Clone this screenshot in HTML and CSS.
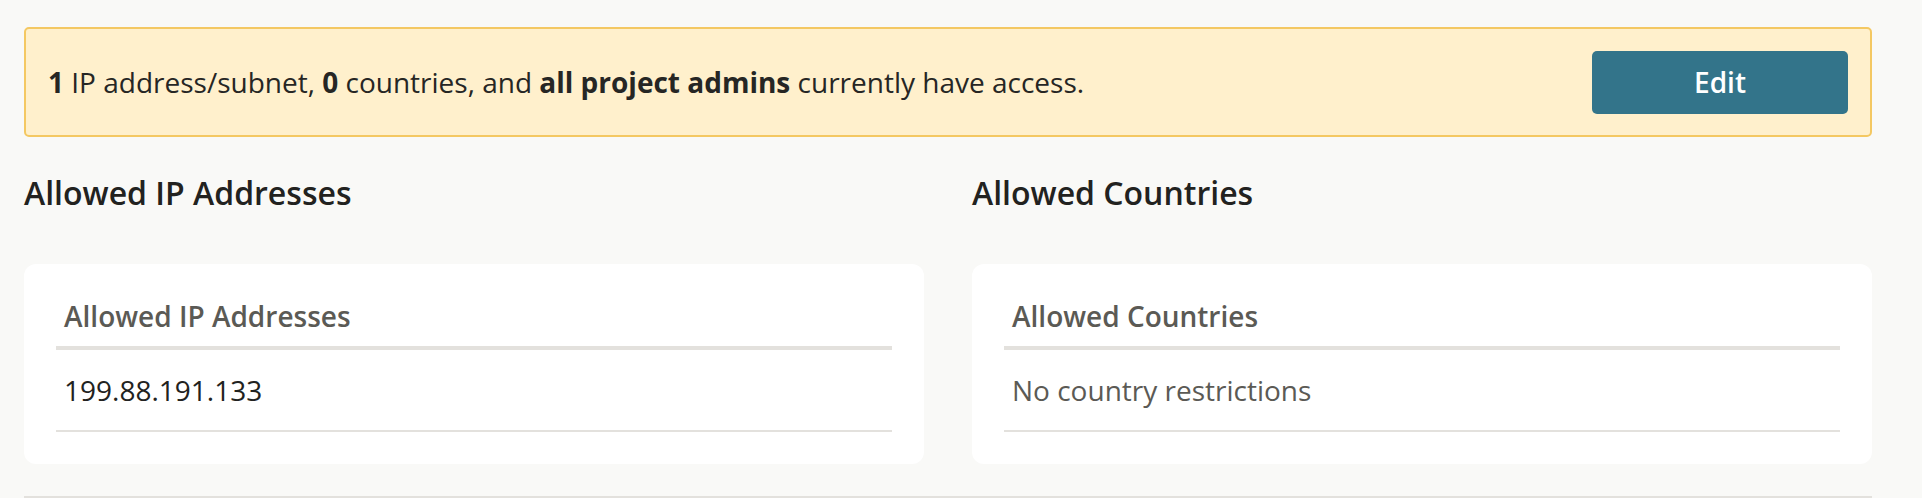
FILE: index.html
```html
<!DOCTYPE html>
<html lang="en">
<head>
<meta charset="utf-8">
<title>Access restrictions</title>
<link rel="stylesheet" href="styles.css">
</head>
<body>
<div class="page">
  <div class="notice">
    <p class="notice-text"><strong>1</strong> IP address/subnet, <strong>0</strong> countries, and <strong>all project admins</strong> currently have access.</p>
    <button class="btn-edit" type="button">Edit</button>
  </div>
  <div class="columns">
    <section class="col">
      <h2 class="col-title">Allowed IP Addresses</h2>
      <div class="card">
        <table class="list">
          <thead><tr><th>Allowed IP Addresses</th></tr></thead>
          <tbody><tr><td class="value">199.88.191.133</td></tr></tbody>
        </table>
      </div>
    </section>
    <section class="col">
      <h2 class="col-title">Allowed Countries</h2>
      <div class="card">
        <table class="list">
          <thead><tr><th>Allowed Countries</th></tr></thead>
          <tbody><tr><td class="muted">No country restrictions</td></tr></tbody>
        </table>
      </div>
    </section>
  </div>
  <div class="divider"></div>
</div>
</body>
</html>
```
FILE: styles.css
```css
html, body {
  margin: 0;
  padding: 0;
  background: #f9f9f7;
}
body {
  font-family: "Open Sans", "Liberation Sans", sans-serif;
  font-size: 28px;
  color: #222220;
}
.page {
  width: 1848px;
  padding: 27px 0 0 24px;
}
.notice {
  display: flex;
  align-items: center;
  justify-content: space-between;
  height: 106px;
  padding: 0 22px 0 22px;
  background: #fff0cc;
  border: 2px solid #f4c862;
  border-radius: 5px;
}
.notice-text {
  margin: 0;
  line-height: 40px;
  color: #262624;
}
.notice-text strong {
  font-weight: 700;
}
.btn-edit {
  width: 256px;
  height: 63px;
  border: 0;
  border-radius: 5px;
  background: #33748a;
  color: #ffffff;
  font-family: "Open Sans", "Liberation Sans", sans-serif;
  font-size: 28px;
  font-weight: 600;
  padding: 0;
}
.columns {
  display: grid;
  grid-template-columns: 1fr 1fr;
  column-gap: 48px;
}
.col-title {
  margin: 34px 0 49px 0;
  font-size: 32px;
  line-height: 44px;
  font-weight: 600;
  color: #222220;
}
.card {
  background: #ffffff;
  border-radius: 12px;
  padding: 32px;
}
.list {
  width: 100%;
  border-collapse: collapse;
}
.list th {
  text-align: left;
  font-weight: 600;
  color: #5b5a55;
  line-height: 40px;
  padding: 0 8px 10px 8px;
  border-bottom: 4px solid #e3e1dd;
}
.list td {
  line-height: 40px;
  padding: 20px 8px;
  border-bottom: 2px solid #e3e1dd;
}
.list td.value {
  color: #222220;
}
.list td.muted {
  color: #5b5a55;
}
.divider {
  margin-top: 32px;
  height: 2px;
  background: #e3e1dd;
}
```
